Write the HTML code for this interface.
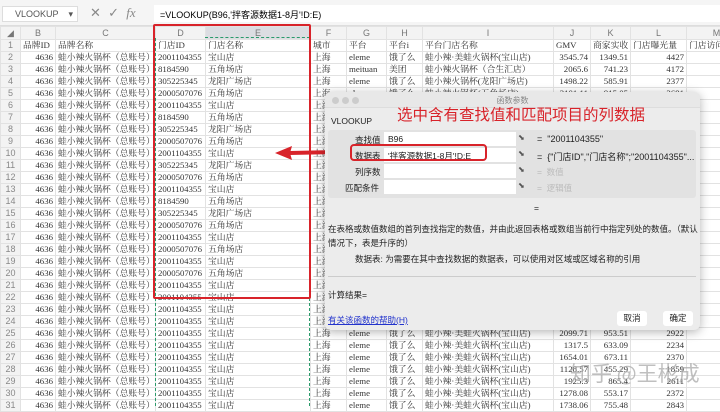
<!DOCTYPE html>
<html><head><meta charset="utf-8"><style>
*{margin:0;padding:0;box-sizing:border-box}
body{width:720px;height:406px;overflow:hidden;background:#fff;font-family:"Liberation Serif","Noto Serif CJK SC",serif;position:relative}
.fb{position:absolute;left:0;top:0;width:720px;height:26px;background:#f5f5f5;border-bottom:1px solid #ddd;font-family:"Liberation Sans",sans-serif}
.nb{position:absolute;left:2px;top:6px;width:76px;height:16px;background:#fff;border:1px solid #ddd;font-size:9px;color:#555;padding:2px 0 0 12px}
table{position:absolute;left:0;top:26px;width:746px;border-collapse:collapse;table-layout:fixed;font-size:8.8px;color:#333}
td{height:12px;border:1px solid #e2e2e2;white-space:nowrap;overflow:hidden;padding:0 2px;line-height:11px}
tr.h td{height:13px;background:#f3f3f3;text-align:center;color:#777;font-family:"Liberation Sans",sans-serif;font-size:9px}
td.n{background:#f3f3f3;text-align:center;color:#888;font-family:"Liberation Sans",sans-serif;font-size:9px}
td.r{text-align:right}
.dlg{position:absolute;left:325px;top:92px;width:375px;height:238px;background:#ececec;border-radius:6px;box-shadow:0 2px 10px rgba(0,0,0,.3);font-family:"Liberation Sans","Noto Sans CJK SC",sans-serif;font-size:8.5px;color:#222}
.dlg .a{position:absolute}
.fld{position:absolute;left:59px;width:132px;height:14px;background:#fff;padding:2px 4px;font-size:8.5px}
.ic{position:absolute;left:193px;width:12px;height:12px;font-size:8px;color:#555}
</style></head><body>
<div class="fb"><div class="nb">VLOOKUP <span style="float:right;margin-right:4px">▾</span></div>
<div style="position:absolute;left:90px;top:5px;font-size:13px;color:#888">✕ &nbsp;✓ &nbsp;<i style="font-family:'Liberation Serif'">fx</i></div>
<div style="position:absolute;left:154px;top:5px;width:566px;height:17px;background:#fff;font-size:9px;padding:3px 6px;font-family:'Liberation Sans','Noto Sans CJK SC',sans-serif">=VLOOKUP(B96,'拌客源数据1-8月'!D:E)</div></div>
<table>
<colgroup><col style="width:20px"><col style="width:35px"><col style="width:100px"><col style="width:50px"><col style="width:105px"><col style="width:36px"><col style="width:40px"><col style="width:36px"><col style="width:131px"><col style="width:37px"><col style="width:40px"><col style="width:56px"><col style="width:60px"></colgroup>
<tr class="h"><td>◢</td><td>B</td><td>C</td><td>D</td><td style="background:#dcdde2">E</td><td>F</td><td>G</td><td>H</td><td>I</td><td>J</td><td>K</td><td>L</td><td>M</td></tr>
<tr><td class="n">1</td><td>品牌ID</td><td>品牌名称</td><td>门店ID</td><td>门店名称</td><td>城市</td><td>平台</td><td>平台i</td><td>平台门店名称</td><td>GMV</td><td>商家实收</td><td>门店曝光量</td><td>门店访问</td></tr>
<tr><td class="n">2</td><td class="r">4636</td><td>蛙小辣火锅杯（总账号）</td><td>2001104355</td><td>宝山店</td><td>上海</td><td>eleme</td><td>饿了么</td><td>蛙小辣·美蛙火锅杯(宝山店)</td><td class="r">3545.74</td><td class="r">1349.51</td><td class="r">4427</td><td></td></tr>
<tr><td class="n">3</td><td class="r">4636</td><td>蛙小辣火锅杯（总账号）</td><td>8184590</td><td>五角场店</td><td>上海</td><td>meituan</td><td>美团</td><td>蛙小辣火锅杯（合生汇店）</td><td class="r">2065.6</td><td class="r">741.23</td><td class="r">4172</td><td></td></tr>
<tr><td class="n">4</td><td class="r">4636</td><td>蛙小辣火锅杯（总账号）</td><td>305225345</td><td>龙阳广场店</td><td>上海</td><td>eleme</td><td>饿了么</td><td>蛙小辣火锅杯(龙阳广场店)</td><td class="r">1498.22</td><td class="r">585.91</td><td class="r">2377</td><td></td></tr>
<tr><td class="n">5</td><td class="r">4636</td><td>蛙小辣火锅杯（总账号）</td><td>2000507076</td><td>五角场店</td><td>上海</td><td>eleme</td><td>饿了么</td><td>蛙小辣火锅杯(五角场店)</td><td class="r">2101.11</td><td class="r">815.05</td><td class="r">2691</td><td></td></tr>
<tr><td class="n">6</td><td class="r">4636</td><td>蛙小辣火锅杯（总账号）</td><td>2001104355</td><td>宝山店</td><td>上海</td><td></td><td></td><td></td><td></td><td></td><td></td><td></td></tr>
<tr><td class="n">7</td><td class="r">4636</td><td>蛙小辣火锅杯（总账号）</td><td>8184590</td><td>五角场店</td><td>上海</td><td></td><td></td><td></td><td></td><td></td><td></td><td></td></tr>
<tr><td class="n">8</td><td class="r">4636</td><td>蛙小辣火锅杯（总账号）</td><td>305225345</td><td>龙阳广场店</td><td>上海</td><td></td><td></td><td></td><td></td><td></td><td></td><td></td></tr>
<tr><td class="n">9</td><td class="r">4636</td><td>蛙小辣火锅杯（总账号）</td><td>2000507076</td><td>五角场店</td><td>上海</td><td></td><td></td><td></td><td></td><td></td><td></td><td></td></tr>
<tr><td class="n">10</td><td class="r">4636</td><td>蛙小辣火锅杯（总账号）</td><td>2001104355</td><td>宝山店</td><td>上海</td><td></td><td></td><td></td><td></td><td></td><td></td><td></td></tr>
<tr><td class="n">11</td><td class="r">4636</td><td>蛙小辣火锅杯（总账号）</td><td>305225345</td><td>龙阳广场店</td><td>上海</td><td></td><td></td><td></td><td></td><td></td><td></td><td></td></tr>
<tr><td class="n">12</td><td class="r">4636</td><td>蛙小辣火锅杯（总账号）</td><td>2000507076</td><td>五角场店</td><td>上海</td><td></td><td></td><td></td><td></td><td></td><td></td><td></td></tr>
<tr><td class="n">13</td><td class="r">4636</td><td>蛙小辣火锅杯（总账号）</td><td>2001104355</td><td>宝山店</td><td>上海</td><td></td><td></td><td></td><td></td><td></td><td></td><td></td></tr>
<tr><td class="n">14</td><td class="r">4636</td><td>蛙小辣火锅杯（总账号）</td><td>8184590</td><td>五角场店</td><td>上海</td><td></td><td></td><td></td><td></td><td></td><td></td><td></td></tr>
<tr><td class="n">15</td><td class="r">4636</td><td>蛙小辣火锅杯（总账号）</td><td>305225345</td><td>龙阳广场店</td><td>上海</td><td></td><td></td><td></td><td></td><td></td><td></td><td></td></tr>
<tr><td class="n">16</td><td class="r">4636</td><td>蛙小辣火锅杯（总账号）</td><td>2000507076</td><td>五角场店</td><td>上海</td><td></td><td></td><td></td><td></td><td></td><td></td><td></td></tr>
<tr><td class="n">17</td><td class="r">4636</td><td>蛙小辣火锅杯（总账号）</td><td>2001104355</td><td>宝山店</td><td>上海</td><td></td><td></td><td></td><td></td><td></td><td></td><td></td></tr>
<tr><td class="n">18</td><td class="r">4636</td><td>蛙小辣火锅杯（总账号）</td><td>2000507076</td><td>五角场店</td><td>上海</td><td></td><td></td><td></td><td></td><td></td><td></td><td></td></tr>
<tr><td class="n">19</td><td class="r">4636</td><td>蛙小辣火锅杯（总账号）</td><td>2001104355</td><td>宝山店</td><td>上海</td><td></td><td></td><td></td><td></td><td></td><td></td><td></td></tr>
<tr><td class="n">20</td><td class="r">4636</td><td>蛙小辣火锅杯（总账号）</td><td>2000507076</td><td>五角场店</td><td>上海</td><td></td><td></td><td></td><td></td><td></td><td></td><td></td></tr>
<tr><td class="n">21</td><td class="r">4636</td><td>蛙小辣火锅杯（总账号）</td><td>2001104355</td><td>宝山店</td><td>上海</td><td></td><td></td><td></td><td></td><td></td><td></td><td></td></tr>
<tr><td class="n">22</td><td class="r">4636</td><td>蛙小辣火锅杯（总账号）</td><td>2001104355</td><td>宝山店</td><td>上海</td><td></td><td></td><td></td><td></td><td></td><td></td><td></td></tr>
<tr><td class="n">23</td><td class="r">4636</td><td>蛙小辣火锅杯（总账号）</td><td>2001104355</td><td>宝山店</td><td>上海</td><td></td><td></td><td></td><td></td><td></td><td></td><td></td></tr>
<tr><td class="n">24</td><td class="r">4636</td><td>蛙小辣火锅杯（总账号）</td><td>2001104355</td><td>宝山店</td><td>上海</td><td></td><td></td><td></td><td></td><td></td><td></td><td></td></tr>
<tr><td class="n">25</td><td class="r">4636</td><td>蛙小辣火锅杯（总账号）</td><td>2001104355</td><td>宝山店</td><td>上海</td><td>eleme</td><td>饿了么</td><td>蛙小辣·美蛙火锅杯(宝山店)</td><td class="r">2099.71</td><td class="r">953.51</td><td class="r">2922</td><td></td></tr>
<tr><td class="n">26</td><td class="r">4636</td><td>蛙小辣火锅杯（总账号）</td><td>2001104355</td><td>宝山店</td><td>上海</td><td>eleme</td><td>饿了么</td><td>蛙小辣·美蛙火锅杯(宝山店)</td><td class="r">1317.5</td><td class="r">633.09</td><td class="r">2234</td><td></td></tr>
<tr><td class="n">27</td><td class="r">4636</td><td>蛙小辣火锅杯（总账号）</td><td>2001104355</td><td>宝山店</td><td>上海</td><td>eleme</td><td>饿了么</td><td>蛙小辣·美蛙火锅杯(宝山店)</td><td class="r">1654.01</td><td class="r">673.11</td><td class="r">2370</td><td></td></tr>
<tr><td class="n">28</td><td class="r">4636</td><td>蛙小辣火锅杯（总账号）</td><td>2001104355</td><td>宝山店</td><td>上海</td><td>eleme</td><td>饿了么</td><td>蛙小辣·美蛙火锅杯(宝山店)</td><td class="r">1128.57</td><td class="r">455.29</td><td class="r">1859</td><td></td></tr>
<tr><td class="n">29</td><td class="r">4636</td><td>蛙小辣火锅杯（总账号）</td><td>2001104355</td><td>宝山店</td><td>上海</td><td>eleme</td><td>饿了么</td><td>蛙小辣·美蛙火锅杯(宝山店)</td><td class="r">1925.3</td><td class="r">865.4</td><td class="r">2611</td><td></td></tr>
<tr><td class="n">30</td><td class="r">4636</td><td>蛙小辣火锅杯（总账号）</td><td>2001104355</td><td>宝山店</td><td>上海</td><td>eleme</td><td>饿了么</td><td>蛙小辣·美蛙火锅杯(宝山店)</td><td class="r">1278.08</td><td class="r">553.17</td><td class="r">2372</td><td></td></tr>
<tr><td class="n">31</td><td class="r">4636</td><td>蛙小辣火锅杯（总账号）</td><td>2001104355</td><td>宝山店</td><td>上海</td><td>eleme</td><td>饿了么</td><td>蛙小辣·美蛙火锅杯(宝山店)</td><td class="r">1738.06</td><td class="r">755.48</td><td class="r">2843</td><td></td></tr>
</table>
<div style="position:absolute;left:155px;top:38px;width:155px;height:368px;border-left:1px dashed #2a9a6a;border-right:1px dashed #2a9a6a"></div>
<div style="position:absolute;left:205px;top:37px;width:105px;border-top:1.5px dashed #2a9a6a"></div>
<div style="position:absolute;left:153px;top:24px;width:158px;height:275px;border:2px solid #d8232a;border-radius:2px"></div>
<svg style="position:absolute;left:272px;top:144px" width="66" height="18"><path d="M64 8 L18 9" stroke="#d8232a" stroke-width="4"/><path d="M3 9 L20 2 L18 9 L20 16 Z" fill="#d8232a"/></svg>
<div class="dlg">
<div class="a" style="left:0;top:0;width:375px;height:16px;border-bottom:1px solid #ddd;border-radius:6px 6px 0 0;background:#e8e8e8"></div>
<div class="a" style="left:7px;top:5px;width:7px;height:7px;border-radius:50%;background:#ccc;box-shadow:10px 0 #ccc,20px 0 #ccc"></div>
<div class="a" style="left:0;width:375px;top:3px;text-align:center;color:#888;font-size:8px">函数参数</div>
<div class="a" style="left:72px;top:11px;color:#d8232a;font-size:15.5px;white-space:nowrap">选中含有查找值和匹配项目的列数据</div>
<div class="a" style="left:3px;top:38px;width:368px;height:68px;background:#e2e2e2;border-radius:3px"></div>
<div class="a" style="left:6px;top:24px">VLOOKUP</div>
<div class="a" style="left:30px;top:42px">查找值</div><div class="fld" style="top:40px">B96</div><div class="ic" style="top:41px">⬊</div><div class="a" style="left:212px;top:42px;font-size:9px">=&nbsp; "2001104355"</div>
<div class="a" style="left:30px;top:58px">数据表</div><div class="fld" style="top:56px">'拌客源数据1-8月'!D:E</div><div class="ic" style="top:57px">⬊</div><div class="a" style="left:212px;top:58px;font-size:9px;white-space:nowrap">=&nbsp; {"门店ID","门店名称";"2001104355"...</div>
<div class="a" style="left:25px;top:52px;width:137px;height:17px;border:2px solid #d8232a;border-radius:4px"></div>
<div class="a" style="left:30px;top:74px">列序数</div><div class="fld" style="top:72px"></div><div class="ic" style="top:73px">⬊</div><div class="a" style="left:212px;top:74px;color:#bbb">=&nbsp; 数值</div>
<div class="a" style="left:20px;top:90px">匹配条件</div><div class="fld" style="top:88px"></div><div class="ic" style="top:89px">⬊</div><div class="a" style="left:212px;top:90px;color:#bbb">=&nbsp; 逻辑值</div>
<div class="a" style="left:209px;top:111px">=</div>
<div class="a" style="left:3px;top:130px;width:370px;line-height:14px">在表格或数值数组的首列查找指定的数值，并由此返回表格或数组当前行中指定列处的数值。（默认情况下，表是升序的）</div>
<div class="a" style="left:30px;top:161px">数据表: 为需要在其中查找数据的数据表，可以使用对区域或区域名称的引用</div>
<div class="a" style="left:3px;top:184px;width:368px;border-top:1px solid #ccc"></div>
<div class="a" style="left:3px;top:197px">计算结果=</div>
<div class="a" style="left:3px;top:222px;color:#2233cc;text-decoration:underline">有关该函数的帮助(H)</div>
<div class="a" style="left:292px;top:219px;width:30px;height:15px;background:#fff;border-radius:3px;text-align:center;line-height:15px">取消</div>
<div class="a" style="left:338px;top:219px;width:30px;height:15px;background:#fff;border-radius:3px;text-align:center;line-height:15px">确定</div>
</div>
<div style="position:absolute;left:570px;top:358px;font-family:'Noto Sans CJK SC',sans-serif;font-size:21px;color:rgba(170,170,170,.75);white-space:nowrap">知乎 @王彬成</div>
</body></html>
